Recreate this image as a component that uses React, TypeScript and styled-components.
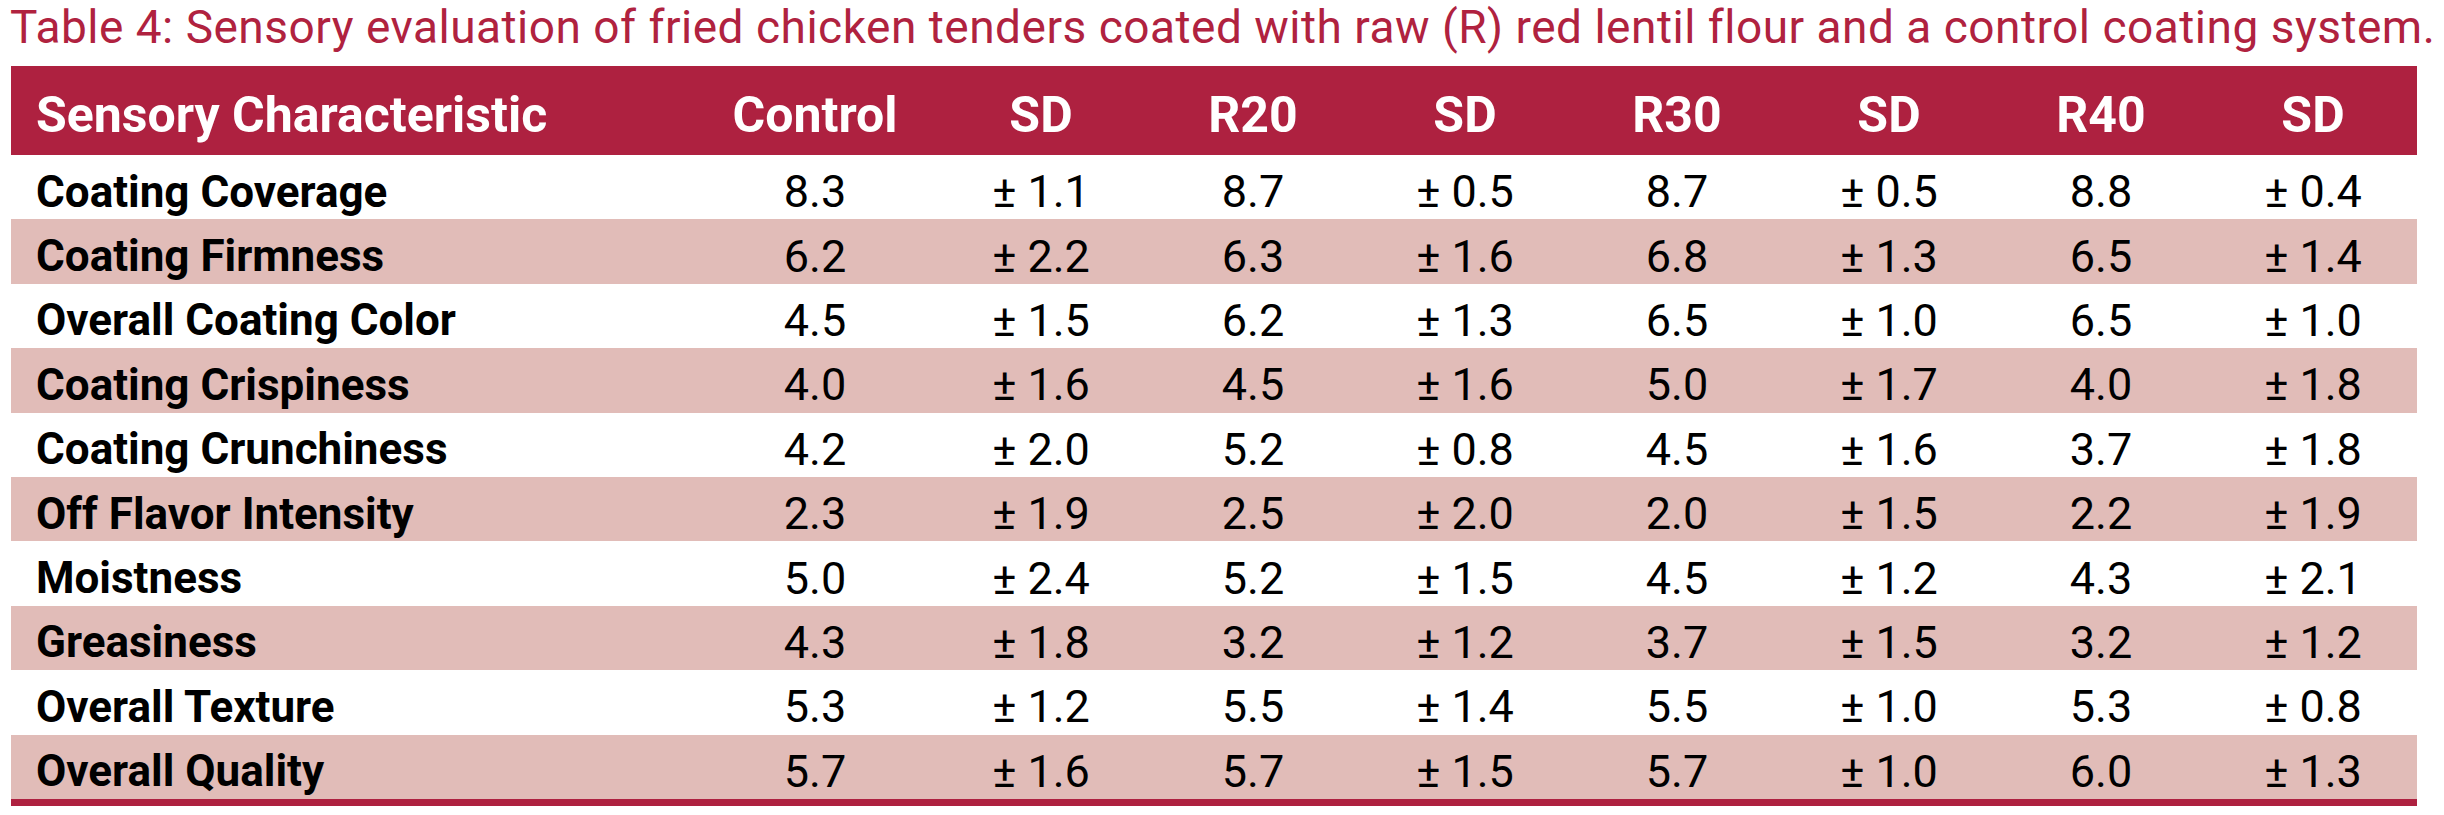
import styled, { createGlobalStyle } from "styled-components";

const GlobalStyle = createGlobalStyle`
  html, body {
    margin: 0;
    padding: 0;
    background: #ffffff;
  }
`

const RED = '#ae2140';
const PINK = '#e1bcb8';
const COLUMNS = '684px 240px repeat(7, 212px)';

const Page = styled.div`
  padding: 0 0 0 11px;
  font-family: Roboto, "Liberation Sans", sans-serif;
`

const Title = styled.h1`
  margin: 0 0 0 -1px;
  height: 66px;
  padding-bottom: 11px;
  box-sizing: border-box;
  line-height: 55px;
  font-size: 46px;
  font-weight: 400;
  letter-spacing: 0.5px;
  color: #b0223f;
  white-space: nowrap;
`

const Table = styled.div`
  display: flex;
  flex-direction: column;
  width: 2406px;
  border-bottom: 7px solid ${RED};
`

const HeaderRow = styled.div`
  display: grid;
  grid-template-columns: ${COLUMNS};
  height: 89px;
  background: ${RED};
  color: #ffffff;
`

const HeaderCell = styled.div<{ $first?: boolean }>`
  display: flex;
  align-items: center;
  justify-content: ${(p) => (p.$first ? 'flex-start' : 'center')};
  padding: 9px 0 0 ${(p) => (p.$first ? '25px' : '0')};
  font-size: 50px;
  font-weight: 700;
  white-space: nowrap;
`

const Row = styled.div<{ $shaded: boolean }>`
  display: grid;
  grid-template-columns: ${COLUMNS};
  height: 64.4px;
  background: ${(p) => (p.$shaded ? PINK : '#ffffff')};
  color: #000000;
`

const Label = styled.div`
  display: flex;
  align-items: center;
  padding: 9px 0 0 25px;
  font-size: 44px;
  font-weight: 700;
  white-space: nowrap;
`

const Value = styled.div`
  display: flex;
  align-items: center;
  justify-content: center;
  padding-top: 9px;
  font-size: 45px;
  font-weight: 400;
  white-space: nowrap;
`

const headers = ['Sensory Characteristic', 'Control', 'SD', 'R20', 'SD', 'R30', 'SD', 'R40', 'SD'];

const rows: [string, string[]][] = [
  ['Coating Coverage', ['8.3', '1.1', '8.7', '0.5', '8.7', '0.5', '8.8', '0.4']],
  ['Coating Firmness', ['6.2', '2.2', '6.3', '1.6', '6.8', '1.3', '6.5', '1.4']],
  ['Overall Coating Color', ['4.5', '1.5', '6.2', '1.3', '6.5', '1.0', '6.5', '1.0']],
  ['Coating Crispiness', ['4.0', '1.6', '4.5', '1.6', '5.0', '1.7', '4.0', '1.8']],
  ['Coating Crunchiness', ['4.2', '2.0', '5.2', '0.8', '4.5', '1.6', '3.7', '1.8']],
  ['Off Flavor Intensity', ['2.3', '1.9', '2.5', '2.0', '2.0', '1.5', '2.2', '1.9']],
  ['Moistness', ['5.0', '2.4', '5.2', '1.5', '4.5', '1.2', '4.3', '2.1']],
  ['Greasiness', ['4.3', '1.8', '3.2', '1.2', '3.7', '1.5', '3.2', '1.2']],
  ['Overall Texture', ['5.3', '1.2', '5.5', '1.4', '5.5', '1.0', '5.3', '0.8']],
  ['Overall Quality', ['5.7', '1.6', '5.7', '1.5', '5.7', '1.0', '6.0', '1.3']],
];

const App = () => {
  return (
    <>
      <GlobalStyle />
      <Page>
        <Title>
          Table 4: Sensory evaluation of fried chicken tenders coated with raw (R) red lentil flour and a control coating system.
        </Title>
        <Table>
          <HeaderRow>
            {headers.map((h, i) => (
              <HeaderCell key={i} $first={i === 0}>{h}</HeaderCell>
            ))}
          </HeaderRow>
          {rows.map(([label, values], r) => (
            <Row key={label} $shaded={r % 2 === 1}>
              <Label>{label}</Label>
              {values.map((v, i) => (
                <Value key={i}>{i % 2 === 1 ? `± ${v}` : v}</Value>
              ))}
            </Row>
          ))}
        </Table>
      </Page>
    </>
  )
}

export default App;
